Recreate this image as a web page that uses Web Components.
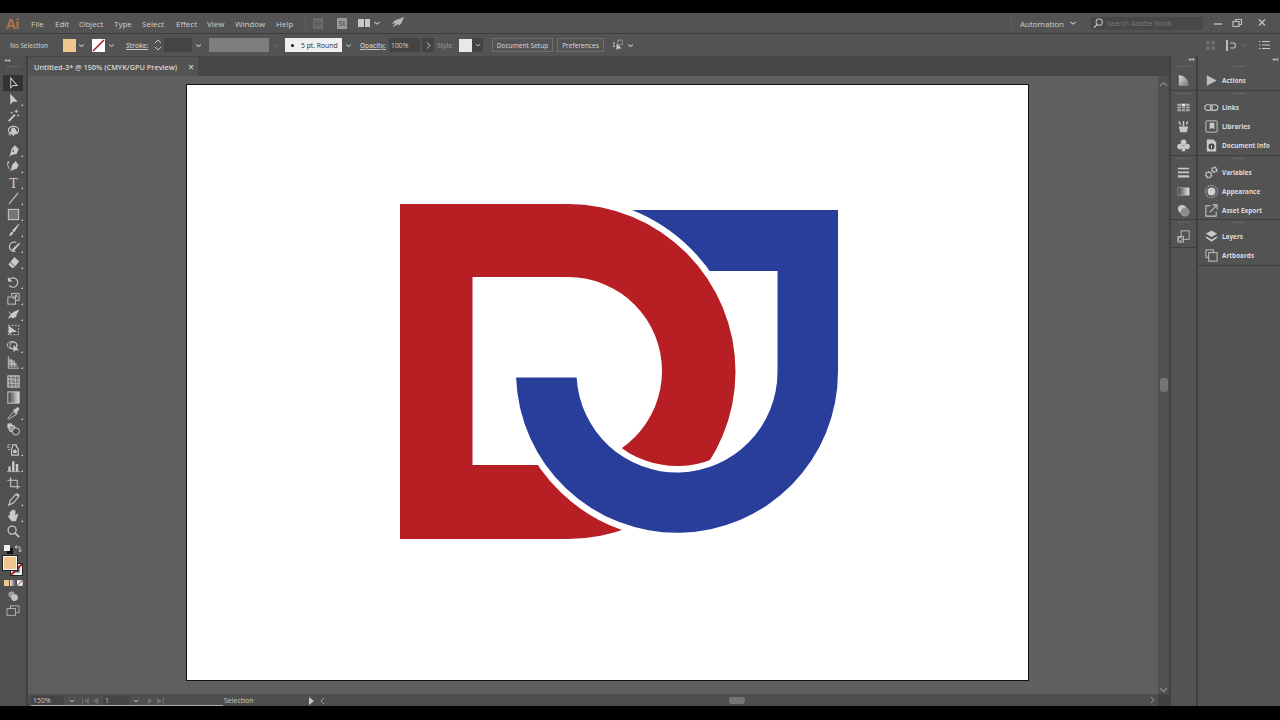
<!DOCTYPE html>
<html>
<head>
<meta charset="utf-8">
<title>Illustrator</title>
<style>
	html, body { margin: 0; height: 100%; background: #000; overflow: hidden; }
	body { font-family: "Open Sans", "Liberation Sans", sans-serif; color: #d4d4d4; }
	ai-stack { height: 720px; }
</style>
</head>
<body>
<ai-stack>
	<ai-menubar></ai-menubar>
	<ai-controlbar></ai-controlbar>
	<ai-workspace>
		<ai-toolbar slot="tools">
			<ai-tool icon="select" active></ai-tool>
			<ai-tool icon="direct" flyout></ai-tool>
			<ai-tool icon="wand"></ai-tool>
			<ai-tool icon="lasso"></ai-tool>
			<ai-tool icon="pen" flyout gap="3"></ai-tool>
			<ai-tool icon="curve" flyout></ai-tool>
			<ai-tool icon="type" flyout></ai-tool>
			<ai-tool icon="line" flyout></ai-tool>
			<ai-tool icon="rect" flyout></ai-tool>
			<ai-tool icon="brush" flyout></ai-tool>
			<ai-tool icon="shaper" flyout></ai-tool>
			<ai-tool icon="eraser" flyout></ai-tool>
			<ai-tool icon="rotate" flyout gap="4"></ai-tool>
			<ai-tool icon="scale" flyout></ai-tool>
			<ai-tool icon="width" flyout></ai-tool>
			<ai-tool icon="free"></ai-tool>
			<ai-tool icon="builder" flyout></ai-tool>
			<ai-tool icon="persp" flyout></ai-tool>
			<ai-tool icon="mesh" gap="3"></ai-tool>
			<ai-tool icon="gradient"></ai-tool>
			<ai-tool icon="dropper" flyout></ai-tool>
			<ai-tool icon="blend"></ai-tool>
			<ai-tool icon="spray" flyout gap="4"></ai-tool>
			<ai-tool icon="graph" flyout></ai-tool>
			<ai-tool icon="artboard" gap="2"></ai-tool>
			<ai-tool icon="slice" flyout></ai-tool>
			<ai-tool icon="hand" flyout></ai-tool>
			<ai-tool icon="zoom"></ai-tool>
			<ai-colors></ai-colors>
		</ai-toolbar>
		<ai-tabstrip slot="tabs">Untitled-3* @ 150% (CMYK/GPU Preview)</ai-tabstrip>
		<ai-canvas slot="canvas">
			<ai-artboard><dj-logo></dj-logo></ai-artboard>
		</ai-canvas>
		<ai-statusbar slot="status"></ai-statusbar>
		<ai-dock slot="icons" narrow>
			<ai-dock-group h="27" pad="7"><ai-dock-icon icon="pie"></ai-dock-icon></ai-dock-group>
			<ai-dock-group h="65"><ai-dock-icon icon="swatches"></ai-dock-icon><ai-dock-icon icon="brushes"></ai-dock-icon><ai-dock-icon icon="club"></ai-dock-icon></ai-dock-group>
			<ai-dock-group h="64"><ai-dock-icon icon="stroke"></ai-dock-icon><ai-dock-icon icon="gradbox"></ai-dock-icon><ai-dock-icon icon="transp"></ai-dock-icon></ai-dock-group>
			<ai-dock-group h="28"><ai-dock-icon icon="links2"></ai-dock-icon></ai-dock-group>
		</ai-dock>
		<ai-dock slot="panels">
			<ai-dock-group h="27" pad="7"><ai-dock-item icon="play">Actions</ai-dock-item></ai-dock-group>
			<ai-dock-group h="65">
				<ai-dock-item icon="links">Links</ai-dock-item>
				<ai-dock-item icon="libs">Libraries</ai-dock-item>
				<ai-dock-item icon="docinfo">Document Info</ai-dock-item>
			</ai-dock-group>
			<ai-dock-group h="64">
				<ai-dock-item icon="gears">Variables</ai-dock-item>
				<ai-dock-item icon="sun">Appearance</ai-dock-item>
				<ai-dock-item icon="export">Asset Export</ai-dock-item>
			</ai-dock-group>
			<ai-dock-group h="46">
				<ai-dock-item icon="layers">Layers</ai-dock-item>
				<ai-dock-item icon="boards">Artboards</ai-dock-item>
			</ai-dock-group>
		</ai-dock>
	</ai-workspace>
</ai-stack>

<script>
const ICONS = {
	select: `<path d="M5 2v10.500l2.600-2.400h4.200z" fill="none" stroke="currentColor" stroke-width="1.100"/>`,
	direct: `<path d="M4.500 1.500v12l3-3h5z" fill="currentColor"/>`,
	wand: `<path d="M3 14l6.500-7" stroke="currentColor" stroke-width="2"/><path d="M11 1.500v4M9 3.500h4M6 4v2M5 5h2M13 7v2M12 8h2" stroke="currentColor" stroke-width=".9"/>`,
	lasso: `<ellipse cx="8" cy="6.500" rx="5.500" ry="4" fill="none" stroke="currentColor" stroke-width="1.200"/><path d="M6 4.500c2-1 3-.5 4 .5l3 6-3-1-2 3-2-3-2 1z" fill="currentColor"/><path d="M3.500 9.500c-1 2 .5 3 2 2" fill="none" stroke="currentColor"/>`,
	pen: `<path d="M9.500 2.500l4 4-2 5-6 1.500-2.500 1.500 1.500-2.500 1.500-6z" fill="currentColor"/><circle cx="7.600" cy="8.400" r="1" fill="#505050"/>`,
	curve: `<path d="M10 2.500l3.500 3.500-2 4.500-5 1.500-2 1.500 1-2.200 1-5z" fill="currentColor"/><path d="M2 4c-1 3 1 5 2 7" fill="none" stroke="currentColor"/><circle cx="2.500" cy="3.500" r="1" fill="currentColor"/>`,
	type: `<text x="8" y="13.500" text-anchor="middle" font-family="Liberation Serif" font-size="15" fill="currentColor">T</text>`,
	line: `<path d="M3 14L13 2" stroke="currentColor" stroke-width="1.100"/>`,
	rect: `<rect x="2.500" y="2.500" width="11" height="11" fill="#777" stroke="#cfcfcf"/>`,
	brush: `<path d="M13.500 1.500L7 8l1.500 1.500z" fill="currentColor" stroke="currentColor"/><path d="M6.500 9l1.500 1.500c-1 2.500-3 3.500-5 3.500 1-1 1-4 3.500-5z" fill="currentColor"/>`,
	shaper: `<path d="M11 3.800A5 5 0 1 0 10 13" fill="none" stroke="currentColor" stroke-width="1.200"/><path d="M6 11.500L14 4l1 1-6.500 7.500z" fill="currentColor"/>`,
	eraser: `<path d="M9 2l5 5-5.500 6.500H6L2.500 10z" fill="currentColor"/><path d="M4.500 7.500l5 5" stroke="#505050"/>`,
	rotate: `<path d="M4 4.500a5 5 0 1 1-.5 6.500" fill="none" stroke="currentColor" stroke-width="1.200"/><path d="M2 2v5h5z" fill="currentColor"/>`,
	scale: `<path d="M6 6V2.500h8V10h-3.500" fill="none" stroke="currentColor"/><rect x="2" y="6.500" width="8" height="7.500" fill="none" stroke="currentColor"/><path d="M7 9l4-4M9 4.500h2.500V7" fill="none" stroke="currentColor"/>`,
	width: `<path d="M2 13c2-5 5-8 12-10-1 3-2 4-3 5 1 2-1 4-2 3-1 2-3 1-3 0-1 0-3 1-4 2z" fill="currentColor"/><path d="M3 5l3 3" stroke="currentColor"/>`,
	free: `<path d="M2.500 2.500h11v10h-11z" fill="none" stroke="currentColor" stroke-dasharray="2 1.500"/><path d="M3 3v9l4-2.500h5z" fill="currentColor"/>`,
	builder: `<ellipse cx="6.500" cy="6.500" rx="5" ry="4" fill="none" stroke="currentColor"/><ellipse cx="8" cy="7" rx="4" ry="3.500" fill="none" stroke="currentColor"/><path d="M8 6v8l2-2h4z" fill="currentColor"/>`,
	persp: `<path d="M2.500 1.500v12.500H14" fill="none" stroke="currentColor"/><path d="M3 3l6 4 4 5.500H3z" fill="#888"/><path d="M6 4.500v8M9 7v5.500M3 6.500h6M3 9.500h8.500" stroke="#ddd" stroke-width=".7"/>`,
	mesh: `<rect x="2" y="2" width="12" height="12" fill="#777" stroke="#d5d5d5"/><path d="M2 6c4-2 8 2 12 0M2 10c4-2 8 2 12 0M6 2c-2 4 2 8 0 12M10 2c-2 4 2 8 0 12" fill="none" stroke="#e2e2e2" stroke-dasharray="1.500 1"/>`,
	gradient: `<defs><linearGradient id="gr"><stop offset="0" stop-color="#3c3c3c"/><stop offset="1" stop-color="#e0e0e0"/></linearGradient></defs><rect x="2" y="2" width="12" height="12" fill="url(#gr)" stroke="#cfcfcf"/>`,
	dropper: `<path d="M3 14l-1-1 6-7 3 3z" fill="none" stroke="currentColor"/><path d="M7.500 4.500l4 4 1-1-.5-1.500 2-2c.5-1.500-1-3-2.500-2.500l-2 2L8.500 3.500z" fill="currentColor"/>`,
	blend: `<rect x="1.500" y="1.500" width="5" height="5" fill="currentColor"/><circle cx="6.500" cy="7" r="3.500" fill="#999" stroke="#cfcfcf"/><circle cx="10.500" cy="10" r="3.800" fill="#505050" stroke="#cfcfcf"/>`,
	spray: `<path d="M1.500 3h3M1 5.500h3M2 8h2" stroke="currentColor"/><path d="M7 3h4v2l2 2v7H6V7l1-2z" fill="none" stroke="currentColor" stroke-width="1.200"/><circle cx="9.500" cy="10" r="2" fill="currentColor"/>`,
	graph: `<path d="M2.500 14V9h2.500v5zM6.500 14V3.500H9V14zM10.500 14V6.500H13V14z" fill="currentColor"/><path d="M1 14.500h14" stroke="currentColor" stroke-width=".8"/>`,
	artboard: `<path d="M5 1v10.500h10M1.500 4.500H12V14" fill="none" stroke="currentColor" stroke-width="1.100"/>`,
	slice: `<path d="M3 14l1.500-5 6-6.500 3 2.500-5.500 6.500z" fill="none" stroke="currentColor" stroke-width="1.200"/><path d="M10.500 2.500l3 2.500 1-1.500-2.500-2.500z" fill="currentColor"/>`,
	hand: `<path d="M4 8V4.500c0-1 1.500-1 1.500 0V3c0-1 1.500-1 1.500 0v-.5c0-1 1.500-1 1.500 0V3c0-1 1.500-1 1.500 0v5l1.500-1.500c1-.8 2 .2 1.300 1.200L10.500 14H6L2.500 9.500c-.7-1.200.7-2 1.500-1.500z" fill="currentColor"/>`,
	zoom: `<circle cx="6.500" cy="6.500" r="4.300" fill="none" stroke="currentColor" stroke-width="1.300"/><path d="M9.800 9.800L14 14" stroke="currentColor" stroke-width="1.800"/>`,
	pie: `<path d="M3 2.500c6 0 10.500 5 10.500 11H3z" fill="url(#pg)"/><defs><linearGradient id="pg" x1="0" y1="0" x2="1" y2="1"><stop offset="0" stop-color="#ddd"/><stop offset="1" stop-color="#777"/></linearGradient></defs>`,
	swatches: `<rect x="1.500" y="4" width="13" height="8" fill="#aaa"/><path d="M1.500 6.600h13M1.500 9.300h13M5.800 4v8M10.200 4v8" stroke="#505050" stroke-width=".8"/><rect x="6" y="4" width="4" height="2.500" fill="#e6e6e6"/>`,
	brushes: `<path d="M3 8h10l-1.500 6h-7z" fill="currentColor"/><path d="M8 8V2M5 6l-2-3.500M11 6l1.500-3.500" stroke="currentColor" stroke-width="1.500"/>`,
	club: `<circle cx="8" cy="4.500" r="3" fill="currentColor"/><circle cx="4.300" cy="9" r="3" fill="currentColor"/><circle cx="11.700" cy="9" r="3" fill="currentColor"/><path d="M7 8h2l1 6H6z" fill="currentColor"/>`,
	stroke: `<path d="M2 3h12v1.500H2zM2 7h12v1.800H2zM2 11h12v2.200H2z" fill="currentColor"/>`,
	gradbox: `<defs><linearGradient id="gb"><stop offset="0" stop-color="#444"/><stop offset="1" stop-color="#e5e5e5"/></linearGradient></defs><rect x="2" y="4" width="12" height="8" fill="url(#gb)" stroke="#aaa" stroke-width=".6"/>`,
	transp: `<circle cx="6.500" cy="6.500" r="4.500" fill="#c8c8c8"/><circle cx="9.500" cy="9.500" r="4.500" fill="#8c8c8c" stroke="#bbb" stroke-width=".6"/>`,
	links2: `<rect x="5.500" y="2" width="8.500" height="9" fill="none" stroke="currentColor" stroke-width=".9"/><rect x="2" y="8" width="6" height="6" fill="#505050" stroke="currentColor" stroke-width=".9"/><circle cx="4.500" cy="11" r="2" fill="none" stroke="currentColor"/>`,
	play: `<path d="M3 2.500L13.500 8 3 13.500z" fill="#bdbdbd"/>`,
	links: `<g fill="none" stroke="currentColor" stroke-width="1.200"><rect x=".8" y="5" width="8" height="6" rx="3"/><rect x="6.800" y="5" width="8" height="6" rx="3"/></g>`,
	libs: `<rect x="2" y="2" width="12" height="12" rx="1" fill="none" stroke="currentColor"/><path d="M6 4h5v7l-2.500-1.500L6 11z" fill="currentColor"/>`,
	docinfo: `<path d="M3 1.500h7l3 3v10H3z" fill="#c9c9c9"/><circle cx="8" cy="9" r="3.200" fill="#3f3f3f"/><rect x="7.400" y="7.700" width="1.200" height="3.300" fill="#ddd"/>`,
	gears: `<circle cx="11" cy="5" r="2.500" fill="none" stroke="currentColor" stroke-width="1.800" stroke-dasharray="2 .6"/><circle cx="5" cy="10.500" r="3" fill="none" stroke="currentColor" stroke-width="1.800" stroke-dasharray="2 .6"/>`,
	sun: `<circle cx="8" cy="8" r="4.200" fill="#d0d0d0"/><circle cx="8" cy="8" r="6.500" fill="none" stroke="#bbb" stroke-width="1.200" stroke-dasharray="1 1"/>`,
	export: `<path d="M7 3H2v11h11V9" fill="none" stroke="currentColor" stroke-width="1.100"/><path d="M6 10l7-7M9 2h5v5" fill="none" stroke="currentColor" stroke-width="1.100"/>`,
	layers: `<path d="M8 1.500l6 3.500-6 3.500-6-3.500z" fill="currentColor"/><path d="M2.500 8L8 11.200 13.500 8 14.500 9 8 13.500 1.500 9z" fill="currentColor"/>`,
	boards: `<path d="M10 5V2H2v8h3" fill="none" stroke="currentColor"/><rect x="5" y="5" width="9" height="9" fill="none" stroke="currentColor"/>`,
	chev: `<path d="M4.500 6.500L8 9.500l3.500-3" fill="none" stroke="currentColor" stroke-width="1.500"/>`,
}

const svg = (name, size = 16, extra = "") =>
	`<svg width="${size}" height="${size}" viewBox="0 0 16 16" ${extra}>${ICONS[name]}</svg>`

const define = (tag, css, html) => {
	customElements.define(tag, class extends HTMLElement {
		constructor() {
			super()
			this.attachShadow({ mode: "open" })
			this.shadowRoot.innerHTML = `<style>${css}</style>${typeof html === "function" ? html(this) : html}`
		}
	})
}

define("ai-stack", `:host { display: flex; flex-direction: column; width: 1280px; }
	.top { height: 13px; flex: none; background: linear-gradient(90deg, #000 560px, #8a5040 560px, #8a5040 592px, #b8b8b8 592px, #b8b8b8 720px, #000 720px) 0 12.500px / 100% 1px no-repeat #000; }
	.bottom { height: 14px; flex: none; background: #000; }`,
	`<div class="top"></div><slot></slot><div class="bottom"></div>`)

customElements.define("ai-menubar", class extends HTMLElement {
	constructor() {
		super()
		this.attachShadow({ mode: "open" })
		const menus = ["File", "Edit", "Object", "Type", "Select", "Effect", "View", "Window", "Help"]
		this.shadowRoot.innerHTML = `<style>
			:host { display: flex; align-items: center; height: 20px; flex: none; background: #535353; border-bottom: 1px solid #3e3e3e; font-size: 8px; color: #cfcfcf; position: relative; }
			.logo { font: bold 14px "Open Sans", sans-serif; color: #a9734a; width: 31px; padding-left: 6px; box-sizing: border-box; letter-spacing: -.3px; }
			.menus { display: grid; grid-template-columns: 24px 24px 35px 28px 34px 31px 28px 41px 29px; width: 274px; }
			.sep { width: 1px; height: 14px; background: #606060; margin: 0 7px 0 0; }
			.app { width: 10px; height: 11px; font: 7.500px "Open Sans", sans-serif; display: flex; align-items: center; justify-content: center; }
			.br { background: #6b6b6b; color: #505050; margin-right: 14px; }
			.st { background: #9a9a9a; color: #3c3c3c; margin-right: 11px; }
			.lay { display: flex; gap: 1px; width: 12px; height: 8px; }
			.lay i { flex: 1; background: #c8c8c8; }
			svg { display: block; flex: none; }
			.spacer { flex: 1; }
			.search { width: 112px; height: 13px; box-sizing: border-box; background: #484848; display: flex; align-items: center; gap: 3px; padding-left: 2px; font-size: 7px; color: #7c7c7c; margin: 0 9px 0 12px; }
			.win { display: flex; align-items: center; height: 13px; margin-right: 2px; }
		</style>
		<span class="logo">Ai</span>
		<div class="menus">${menus.map((m) => `<span>${m}</span>`).join("")}</div>
		<span class="sep"></span>
		<span class="app br">Br</span>
		<span class="app st">St</span>
		<span class="lay"><i></i><i></i></span>
		<span style="color:#c4c4c4;margin:0 8px 0 1px">${svg("chev", 12)}</span>
		<svg width="14" height="14" viewBox="0 0 16 16"><path d="M15 1L4 5 1 9l4-1-3 5 6-4 1 2 3-3z" fill="#b5b5b5"/></svg>
		<span class="spacer"></span>
		<span class="sep" style="margin-right:8px"></span>
		<span>Automation</span>
		<span style="margin-left:3px;color:#c4c4c4">${svg("chev", 12)}</span>
		<span class="search"><svg width="11" height="11" viewBox="0 0 16 16"><circle cx="9" cy="6" r="4.500" fill="none" stroke="#c5c5c5" stroke-width="1.500"/><path d="M6 9.500L1.500 14" stroke="#c5c5c5" stroke-width="1.800"/></svg>Search Adobe Stock</span>
		<span class="win">
			<svg width="14" height="12" viewBox="0 0 14 12"><path d="M2 7h8" stroke="#bbb" stroke-width="1.500"/></svg>
			<svg width="24" height="12" viewBox="0 0 24 12"><path d="M7 4.500h6v5H7zM9.500 4.500V2.500h6v5h-2.500" fill="none" stroke="#bbb" stroke-width="1.200"/></svg>
			<svg style="margin-left:4px" width="24" height="12" viewBox="0 0 24 12"><path d="M5 2.500l6 6M11 2.500l-6 6" stroke="#bbb" stroke-width="1.500"/></svg>
		</span>`
	}
})

customElements.define("ai-controlbar", class extends HTMLElement {
	constructor() {
		super()
		this.attachShadow({ mode: "open" })
		const chev = (ml, mr, c = "#bdbdbd") => `<span style="margin:0 ${mr}px 0 ${ml}px;color:${c};flex:none;display:flex">${svg("chev", 11)}</span>`
		this.shadowRoot.innerHTML = `<style>
			:host { display: flex; align-items: center; height: 22px; flex: none; background: #535353; font-size: 6.800px; color: #cfcfcf; box-sizing: border-box; padding-left: 10px; }
			.nosel { font-weight: 600; width: 53px; color: #bdbdbd; font-size: 6.300px; flex: none; }
			.sw { width: 13px; height: 13px; flex: none; }
			.field { background: #444; height: 14px; flex: none; }
			.u { text-decoration: underline; color: #c8c8c8; font-weight: 600; flex: none; font-size: 6.500px; }
			.btn { border: 1px solid #707070; display: flex; align-items: center; justify-content: center; box-sizing: border-box; height: 14px; flex: none; color: #dcdcdc; font-size: 6.600px; }
			svg { display: block; }
			.spacer { flex: 1; }
		</style>
		<span class="nosel">No Selection</span>
		<span class="sw" style="background:#f0c78f"></span>${chev(0, 5)}
		<svg class="sw" viewBox="0 0 13 13"><rect width="13" height="13" fill="#fff"/><path d="M1 12L12 1" stroke="#b01e28" stroke-width="1.600"/></svg>${chev(1, 9)}
		<span class="u" style="width:26px">Stroke:</span>
		<svg width="12" height="14" viewBox="0 0 12 14"><path d="M3 5l3-3 3 3M3 9l3 3 3-3" fill="none" stroke="#c5c5c5"/></svg>
		<span class="field" style="width:28px;margin-left:0"></span>${chev(1, 5)}
		<span style="width:60px;height:14px;background:#7e7e7e;flex:none"></span>${chev(1, 4, "#6a6a6a")}
		<span style="width:57px;height:14px;background:#f0f0f0;color:#2c2c2c;flex:none;display:flex;align-items:center;box-sizing:border-box;padding-left:6px;gap:7px"><i style="width:3px;height:3px;background:#111;border-radius:50%"></i>5 pt. Round</span>${chev(1, 6)}
		<span class="u" style="width:29px">Opacity:</span>
		<span class="field" style="width:31px;display:flex;align-items:center;padding-left:2px;box-sizing:border-box;color:#d0d0d0">100%</span>
		<span class="field" style="width:12px;margin:0 3px 0 2px;display:flex;align-items:center;justify-content:center"><svg width="5" height="7" viewBox="0 0 5 7"><path d="M1 .5l3 3-3 3" fill="none" stroke="#ccc"/></svg></span>
		<span style="width:22px;color:#9a9a9a;flex:none">Style:</span>
		<span class="sw" style="background:#e8e8e8"></span>
		<span class="field" style="width:11px;display:flex;align-items:center;justify-content:center;color:#ccc;margin-right:9px">${svg("chev", 10)}</span>
		<span class="btn" style="width:61px;margin-right:4px">Document Setup</span>
		<span class="btn" style="width:47px;margin-right:8px">Preferences</span>
		<svg width="12" height="12" viewBox="0 0 16 16"><path d="M1 5h3M1 10h3M2.500 5v5" stroke="#ccc"/><rect x="8" y="1.500" width="6" height="6" fill="none" stroke="#ccc" stroke-dasharray="1.500 1"/><path d="M6 6v9l2.500-2.500H13z" fill="#ccc"/></svg>
		${chev(1, 0)}
		<span class="spacer"></span>
		<svg width="11" height="11" viewBox="0 0 11 11" fill="#6f6f6f"><rect x="1" y="1" width="3.500" height="3.500"/><rect x="6.500" y="1" width="3.500" height="3.500"/><rect x="1" y="6.500" width="3.500" height="3.500"/><rect x="6.500" y="6.500" width="3.500" height="3.500"/></svg>
		<svg style="margin-left:9px" width="13" height="13" viewBox="0 0 13 13"><path d="M1 1h2v11H1z" fill="#bbb"/><path d="M5 4h3a2.500 2.500 0 0 1 0 5H5" fill="none" stroke="#bbb" stroke-width="1.200"/></svg>
		${chev(1, 9, "#6f6f6f")}
		<svg style="margin-right:9px" width="12" height="10" viewBox="0 0 12 10"><path d="M3 1.500h8M3 5h8M3 8.500h8M0 1.500h1.500M0 5h1.500M0 8.500h1.500" stroke="#c8c8c8" stroke-width="1.200"/></svg>`
	}
})

define("ai-workspace", `:host { display: grid; grid-template-columns: 26px 1143px 27px 84px; flex: none; height: 650px; background: #404040; }
	.center { display: flex; flex-direction: column; min-width: 0; height: 650px; padding-left: 2px; box-sizing: border-box; }
	::slotted([slot=icons]) { margin-left: 2px; }
	::slotted([slot=panels]) { margin-left: 2px; }`,
	`<slot name="tools"></slot>
	<div class="center"><slot name="tabs"></slot><slot name="canvas"></slot><slot name="status"></slot></div>
	<slot name="icons"></slot><slot name="panels"></slot>`)

define("ai-toolbar", `:host { display: flex; flex-direction: column; align-items: center; background: #505050; height: 650px; box-sizing: border-box; padding-top: 19px; position: relative; }
	.head { position: absolute; top: 1px; left: 4px; color: #bbb; font-size: 6px; line-height: 6px; }
	.grip { position: absolute; top: 10px; left: 7px; width: 13px; border-top: 1px dotted #777; }`,
	`<span class="head">◂◂</span><span class="grip"></span><slot></slot>`)

customElements.define("ai-tool", class extends HTMLElement {
	constructor() {
		super()
		this.attachShadow({ mode: "open" })
		this.shadowRoot.innerHTML = `<style>
			:host { display: block; position: relative; width: 20px; height: 16px; color: #c9c9c9; flex: none; }
			:host([active]) { background: #333; }
			svg { display: block; margin: .5px auto 0; width: 15px; height: 15px; }
			.fly { position: absolute; right: 0; bottom: 1px; width: 0; height: 0; border-left: 2px solid transparent; border-bottom: 2px solid #cfcfcf; display: none; }
			:host([flyout]) .fly { display: block; }
		</style><svg viewBox="0 0 16 16">${ICONS[this.getAttribute("icon")]}</svg><span class="fly"></span>`
		if (this.hasAttribute("gap")) this.style.marginTop = this.getAttribute("gap") + "px"
	}
})

define("ai-colors", `:host { display: flex; flex-direction: column; align-items: center; margin-top: 5px; width: 26px; position: relative; }
	.top { display: flex; width: 20px; justify-content: space-between; align-items: center; height: 10px; padding: 0 1px; box-sizing: border-box; }
	svg { display: block; }
	.stack { position: relative; width: 21px; height: 25px; margin-top: 1px; }
	.fill { position: absolute; left: 0; top: 1px; width: 12px; height: 12px; background: #f0c88f; border: 1px solid #f4f4f4; box-shadow: 0 0 0 1px #222; z-index: 1; }
	.stroke { position: absolute; left: 7px; top: 8px; }
	.modes { display: flex; gap: 1px; height: 6px; width: 19px; }
	.modes i { display: block; width: 6px; height: 6px; }`,
	`<div class="top">
		<svg width="9" height="9" viewBox="0 0 9 9"><rect x="3" y="3" width="6" height="6" fill="#111"/><rect x="0" y="0" width="6" height="6" fill="#eee"/></svg>
		<svg width="8" height="8" viewBox="0 0 8 8"><path d="M1 2h5v5M1 2l2-1.500M1 2l2 1.500M6 7L4.500 5M6 7l1.500-2" fill="none" stroke="#c5c5c5" stroke-width=".9"/></svg>
	</div>
	<div class="stack"><div class="fill"></div>
		<svg class="stroke" width="13" height="13" viewBox="0 0 13 13"><rect x=".5" y=".5" width="12" height="12" fill="#eee" stroke="#222"/><rect x="3.500" y="3.500" width="6" height="6" fill="#505050"/><path d="M1 12L12 1" stroke="#b01e28" stroke-width="1.800"/></svg>
	</div>
	<div class="modes"><i style="background:#f0c88f"></i><i style="background:linear-gradient(90deg,#eee,#444)"></i><svg width="6" height="6" viewBox="0 0 6 6"><rect width="6" height="6" fill="#eee"/><path d="M0 6L6 0" stroke="#b01e28"/></svg></div>
	<svg width="12" height="12" viewBox="0 0 16 16" style="margin-top:4px"><rect x="2" y="2" width="8" height="8" rx="3" fill="#9c9c9c"/><circle cx="10" cy="10" r="4.500" fill="#c4c4c4"/></svg>
	<svg width="14" height="12" viewBox="0 0 16 14" style="margin-top:3px"><rect x="5" y="1" width="10" height="8" fill="none" stroke="#bdbdbd"/><rect x="1" y="4" width="10" height="8" fill="#505050" stroke="#bdbdbd"/></svg>`)

define("ai-tabstrip", `:host { display: flex; height: 20px; flex: none; background: #464646; box-sizing: border-box; padding-top: 1px; font-size: 7.300px; font-weight: 600; color: #d8d8d8; }
	.tab { display: flex; align-items: center; width: 170px; height: 19px; box-sizing: border-box; padding: 0 4px 0 6px; background: #535353; justify-content: space-between; }
	.x { font-size: 10px; color: #cfcfcf; line-height: 1; }`,
	`<div class="tab"><span><slot></slot></span><span class="x">×</span></div>`)

define("ai-canvas", `:host { display: flex; height: 618px; flex: none; background: #5f5f5f; }
	.view { flex: 1; box-sizing: border-box; padding: 8px 0 0 158px; }
	.vbar { width: 11px; margin-left: 1px; background: #505050; display: flex; flex-direction: column; align-items: center; justify-content: space-between; padding: 5px 0 1px; box-sizing: border-box; color: #8c8c8c; position: relative; }
	.thumb { position: absolute; top: 302px; left: 2px; width: 8px; height: 14px; background: #757575; border-radius: 3px; }
	svg { display: block; }`,
	`<div class="view"><slot></slot></div>
	<div class="vbar">
		<svg width="9" height="6" viewBox="0 0 9 6"><path d="M1 5l3.500-3.500L8 5" fill="none" stroke="currentColor" stroke-width="1.200"/></svg>
		<span class="thumb"></span>
		<svg width="9" height="6" viewBox="0 0 9 6"><path d="M1 1l3.500 3.500L8 1" fill="none" stroke="currentColor" stroke-width="1.200"/></svg>
	</div>`)

define("ai-artboard", `:host { display: block; width: 841px; height: 595px; background: #fff; border: 1px solid #111; }`, `<slot></slot>`)

define("dj-logo", `:host { display: block; width: 841px; height: 595px; } svg { display: block; }`,
	`<svg width="841" height="595" viewBox="187 85 841 595">
		<defs>
			<path id="j" d="M620 210H838V372A161 161 0 0 1 516.100 377.500H576.650A100.500 100.500 0 0 0 777.500 372V271H680Z"/>
			<clipPath id="low"><rect x="400" y="300" width="460" height="260"/></clipPath>
		</defs>
		<use href="#j" fill="#293e9a"/>
		<path d="M400 204H568A167.500 167.500 0 0 1 568 539H400ZM472.500 277V465H568A94 94 0 0 0 568 277Z" fill="#b71f25" stroke="#fff" stroke-width="12.500" paint-order="stroke" fill-rule="evenodd"/>
		<g clip-path="url(#low)"><use href="#j" fill="#293e9a" stroke="#fff" stroke-width="13" paint-order="stroke"/></g>
	</svg>`)

customElements.define("ai-statusbar", class extends HTMLElement {
	constructor() {
		super()
		this.attachShadow({ mode: "open" })
		const nav = (d) => `<svg width="10" height="8" viewBox="0 0 10 8" fill="#707070">${d}</svg>`
		this.shadowRoot.innerHTML = `<style>
			:host { display: flex; align-items: center; height: 12px; flex: none; background: #4e4e4e; font-size: 7px; color: #c8c8c8; padding: 1px 0 0 3px; position: relative; box-sizing: border-box; width: 1130px; }
			.f { background: #444; height: 10px; display: flex; align-items: center; padding-left: 2px; box-sizing: border-box; flex: none; }
			.c { flex: none; color: #c4c4c4; display: flex; }
			svg { display: block; flex: none; }
			.line { position: absolute; left: 3px; top: 11px; width: 192px; height: 1px; background: #b0b0b0; }
			.thumb { position: absolute; left: 701px; top: 3px; width: 16px; height: 7px; background: #757575; border-radius: 3px; }
		</style>
		<span class="f" style="width:33px">150%</span><span class="c" style="margin:0 4px 0 3px">${svg("chev", 10)}</span>
		${nav('<path d="M1 1h1v6H1zM8 1v6L3 4z"/>')}${nav('<path d="M7 1v6L2 4z"/>')}
		<span class="f" style="width:26px;margin:0 0 0 2px">1</span><span class="c" style="margin:0 4px 0 2px">${svg("chev", 10)}</span>
		${nav('<path d="M3 1v6l5-3z"/>')}${nav('<path d="M2 1v6l5-3zM8 1h1v6H8z"/>')}
		<span style="margin-left:59px;width:84px;flex:none">Selection</span>
		<svg width="6" height="8" viewBox="0 0 6 8"><path d="M1 0v8l5-4z" fill="#c5c5c5"/></svg>
		<svg style="margin-left:6px" width="5" height="8" viewBox="0 0 5 8"><path d="M4 1L1 4l3 3" fill="none" stroke="#999"/></svg>
		<span class="line"></span><span class="thumb"></span>
		<svg style="position:absolute;right:3px;top:2px" width="5" height="8" viewBox="0 0 5 8"><path d="M1 1l3 3-3 3" fill="none" stroke="#999"/></svg>`
	}
})

customElements.define("ai-dock", class extends HTMLElement {
	constructor() {
		super()
		this.attachShadow({ mode: "open" })
		this.shadowRoot.innerHTML = `<style>
			:host { display: block; background: #535353; height: 650px; position: relative; }
			.head { height: 8px; font-size: 6px; line-height: 6px; color: #bbb; display: flex; justify-content: flex-end; padding-right: 2px; }
		</style><div class="head">◂◂</div><slot></slot>`
	}
})

customElements.define("ai-dock-group", class extends HTMLElement {
	constructor() {
		super()
		this.attachShadow({ mode: "open" })
		this.shadowRoot.innerHTML = `<style>
			:host { display: block; box-sizing: border-box; border-bottom: 1px solid #3f3f3f; position: relative; }
			.grip { position: absolute; top: 2px; left: 50%; width: 12px; margin-left: -6px; border-top: 1px dotted #757575; }
		</style><span class="grip"></span><slot></slot>`
		this.style.height = this.getAttribute("h") + "px"
		this.style.paddingTop = (this.getAttribute("pad") || 7) + "px"
	}
})

define("ai-dock-icon", `:host { display: flex; align-items: center; justify-content: center; height: 19px; color: #c8c8c8; }
	svg { display: block; }`,
	(el) => svg(el.getAttribute("icon"), 15))

define("ai-dock-item", `:host { display: flex; align-items: center; height: 19px; padding-left: 6px; gap: 3px; font-size: 6.400px; font-weight: 700; color: #dcdcdc; white-space: nowrap; }
	svg { display: block; flex: none; color: #c8c8c8; }`,
	(el) => svg(el.getAttribute("icon"), 15) + `<slot></slot>`)
</script>
</body>
</html>
